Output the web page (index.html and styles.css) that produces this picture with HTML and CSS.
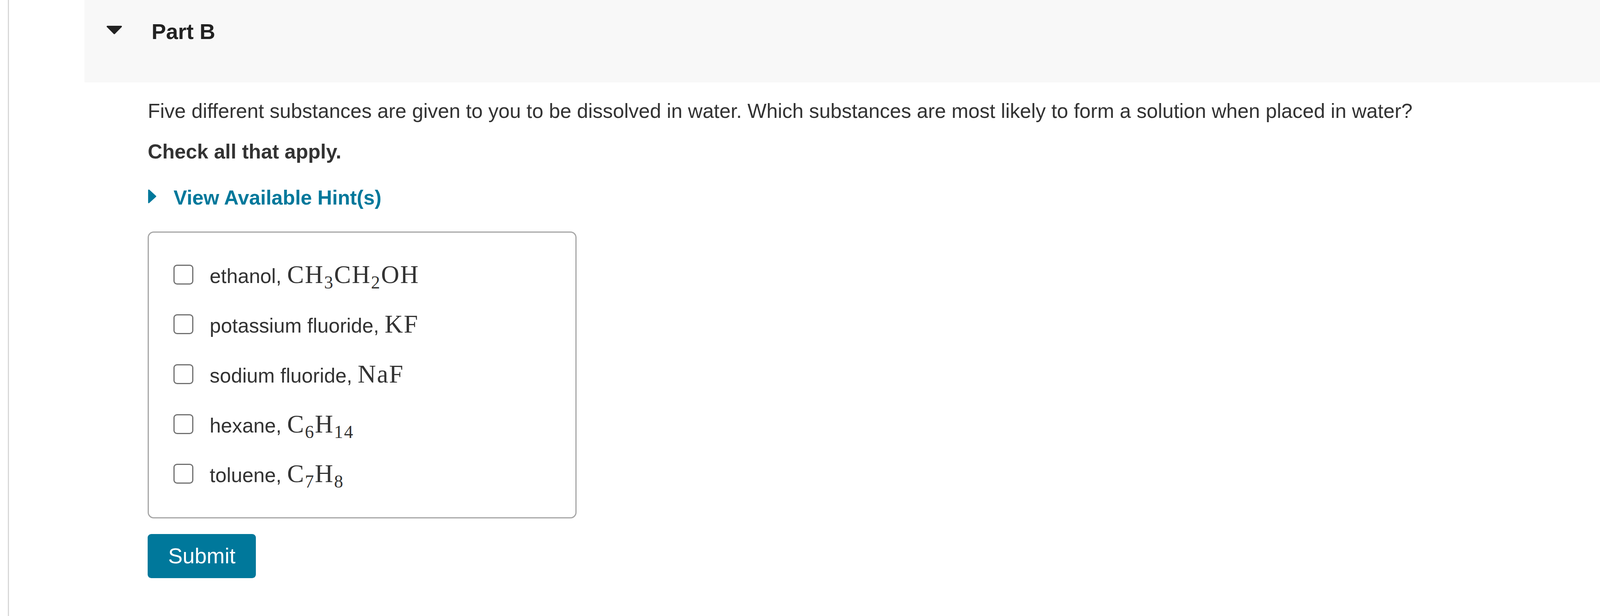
FILE: index.html
```html
<!DOCTYPE html>
<html lang="en">
<head>
<meta charset="utf-8">
<title>Part B</title>
<link rel="stylesheet" href="styles.css">
</head>
<body>
<div class="page">
  <section class="part">
    <div class="part-header">
      <svg class="caret-down" viewBox="0 0 14 8" aria-hidden="true"><polygon points="1,1 13,1 7,7" /></svg>
      <h2 class="part-title">Part B</h2>
    </div>
    <div class="part-body">
      <p class="question">Five different substances are given to you to be dissolved in water. Which substances are most likely to form a solution when placed in water?</p>
      <p class="instruction">Check all that apply.</p>
      <div class="hint">
        <svg class="caret-right" viewBox="0 0 8 13" aria-hidden="true"><polygon points="1,1 7,6.5 1,12" /></svg>
        <span class="hint-label">View Available Hint(s)</span>
      </div>
      <div class="choices">
        <label class="choice"><input type="checkbox" class="choice-box"><span class="choice-text">ethanol, <span class="math">CH<sub>3</sub>CH<sub>2</sub>OH</span></span></label>
        <label class="choice"><input type="checkbox" class="choice-box"><span class="choice-text">potassium fluoride, <span class="math">KF</span></span></label>
        <label class="choice"><input type="checkbox" class="choice-box"><span class="choice-text">sodium fluoride, <span class="math">NaF</span></span></label>
        <label class="choice"><input type="checkbox" class="choice-box"><span class="choice-text">hexane, <span class="math">C<sub>6</sub>H<sub>14</sub></span></span></label>
        <label class="choice"><input type="checkbox" class="choice-box"><span class="choice-text">toluene, <span class="math">C<sub>7</sub>H<sub>8</sub></span></span></label>
      </div>
      <button class="submit" type="button">Submit</button>
    </div>
  </section>
</div>
</body>
</html>
```

FILE: styles.css
```css
html {
  zoom: 3.0759;
}

body {
  margin: 0;
  background: #ffffff;
  font-family: "Liberation Sans", Arial, sans-serif;
  color: #333333;
}

.page {
  margin-left: 6.5px;
  border-left: 1px solid #d8d8d8;
  min-height: 520px;
  padding-left: 62.7px;
}

.part-header {
  background: #f8f8f8;
  height: 68.6px;
  box-sizing: border-box;
  display: flex;
  align-items: flex-start;
  padding: 15.5px 0 0 18.3px;
}

.caret-down {
  width: 13.4px;
  height: 7.6px;
  margin-top: 5.6px;
  margin-right: 24.3px;
  fill: #222222;
  stroke: #222222;
  stroke-width: 1.4;
  stroke-linejoin: round;
  flex: none;
}

.part-title {
  margin: 0;
  font-size: 18px;
  line-height: 22px;
  font-weight: bold;
  color: #222222;
}

.part-body {
  padding: 12px 0 0 52.8px;
}

.question {
  margin: 0;
  font-size: 16.8px;
  line-height: 24px;
}

.instruction {
  margin: 10px 0 0;
  font-size: 16.8px;
  line-height: 24px;
  font-weight: bold;
}

.hint {
  margin-top: 14px;
  height: 24px;
  display: flex;
  align-items: center;
  color: #00789b;
  font-size: 16.8px;
  font-weight: bold;
}

.caret-right {
  width: 7.5px;
  height: 13px;
  margin-right: 14px;
  margin-top: -2px;
  fill: #00789b;
  stroke: #00789b;
  stroke-width: 1.2;
  stroke-linejoin: round;
  flex: none;
}

.choices {
  margin-top: 16.3px;
  width: 357px;
  box-sizing: border-box;
  border: 1px solid #a6a6a6;
  border-radius: 5px;
  padding: 14px 0 15.5px 20.4px;
}

.choice {
  display: flex;
  align-items: center;
  height: 41.5px;
}

.choice-box {
  appearance: none;
  -webkit-appearance: none;
  margin: 0 13.6px 0 0;
  width: 16.6px;
  height: 16.6px;
  box-sizing: border-box;
  border: 1px solid #707070;
  border-radius: 3px;
  background: #ffffff;
  flex: none;
}

.choice-text {
  font-size: 16.8px;
  color: #333333;
}

.math {
  font-family: "Liberation Serif", "Times New Roman", serif;
  font-size: 21px;
  letter-spacing: 0.8px;
  color: #333333;
}

.math sub {
  font-size: 15px;
  vertical-align: -4.5px;
  line-height: 0;
}

.submit {
  display: block;
  margin-top: 13px;
  height: 36.5px;
  padding: 0 17px;
  border: 0;
  border-radius: 3px;
  background: #00789b;
  color: #ffffff;
  font-family: "Liberation Sans", Arial, sans-serif;
  font-size: 18px;
}
```
